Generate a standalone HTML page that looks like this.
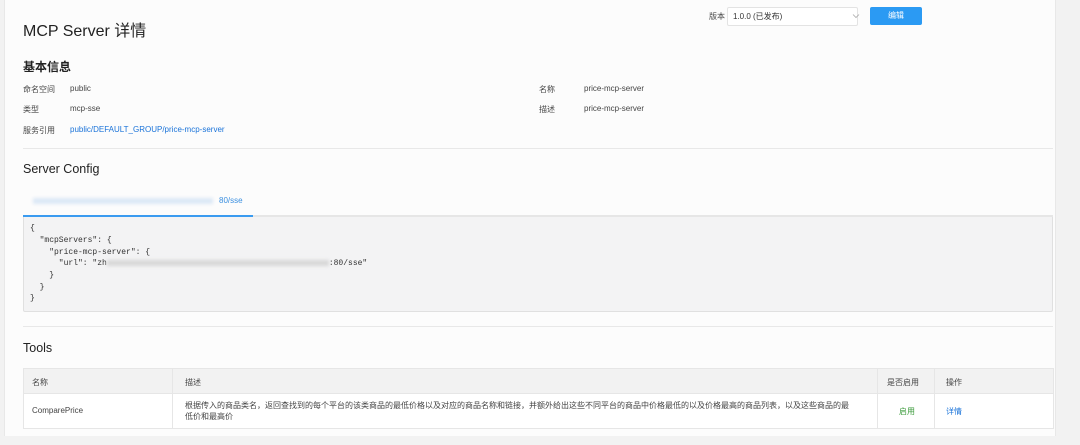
<!DOCTYPE html>
<html><head><meta charset="utf-8"><style>
*{margin:0;padding:0;box-sizing:border-box}
body{width:1080px;height:445px;overflow:hidden;background:#f2f2f2;font-family:"Liberation Sans","Noto Sans CJK SC",sans-serif;color:#333;position:relative}
.card{position:absolute;left:4px;top:0;width:1052px;height:436px;background:#fcfcfc;border-left:1px solid #e8e8e8;border-right:1px solid #e8e8e8}
.a{position:absolute;white-space:nowrap}
.s{font-size:8px;color:#444}
.hr{position:absolute;left:23px;width:1030px;height:1px;background:#e8e8e8}
.mono{font-family:"Liberation Mono","Noto Sans CJK SC",monospace;font-size:8px;color:#333;position:absolute;left:30px;white-space:pre}
.blur{display:inline-block;background:#d8d8d8;filter:blur(1.5px);height:6px;vertical-align:middle}
</style></head><body>
<div class="card"></div>
<div class="a" style="left:23px;top:17px;font-size:16px;color:#222">MCP Server 详情</div>
<div class="a s" style="left:709px;top:11px">版本</div>
<div class="a" style="left:727px;top:7px;width:131px;height:19px;background:#fff;border:1px solid #e3e3e3;border-radius:2px"></div>
<div class="a s" style="left:733px;top:11px;color:#333">1.0.0 (已发布)</div>
<svg class="a" style="left:852px;top:13px" width="8" height="6"><path d="M1 1.5L4 4.5L7 1.5" fill="none" stroke="#aaa" stroke-width="0.8"/></svg>
<div class="a" style="left:870px;top:7px;width:52px;height:18px;background:#2b9af3;border-radius:2px;color:#fff;font-size:8px;text-align:center;line-height:18px">编辑</div>
<div class="a" style="left:23px;top:58px;font-size:12px;font-weight:bold;color:#222">基本信息</div>
<div class="a s" style="left:23px;top:84px">命名空间</div><div class="a s" style="left:70px;top:84px">public</div>
<div class="a s" style="left:23px;top:104px">类型</div><div class="a s" style="left:70px;top:104px">mcp-sse</div>
<div class="a s" style="left:23px;top:125px">服务引用</div><div class="a s" style="left:70px;top:125px;color:#1a73d9">public/DEFAULT_GROUP/price-mcp-server</div>
<div class="a s" style="left:539px;top:84px">名称</div><div class="a s" style="left:584px;top:84px">price-mcp-server</div>
<div class="a s" style="left:539px;top:104px">描述</div><div class="a s" style="left:584px;top:104px">price-mcp-server</div>
<div class="hr" style="top:148px"></div>
<div class="a" style="left:23px;top:162px;font-size:12.5px;color:#222">Server Config</div>
<div class="a" style="left:33px;top:198px;width:180px;height:6px;background:#dce8f6;filter:blur(1.5px)"></div>
<div class="a s" style="left:219px;top:196px;color:#3a8fe0">80/sse</div>
<div class="a" style="left:23px;top:215px;width:1030px;height:2px;background:#e6e6e6"></div>
<div class="a" style="left:23px;top:215px;width:230px;height:2px;background:#3a9bf0"></div>
<div class="a" style="left:23px;top:217px;width:1030px;height:95px;background:#f3f3f4;border:1px solid #e0e0e0;border-top:none;border-radius:0 0 2px 2px"></div>
<div class="mono" style="top:224px">{</div>
<div class="mono" style="top:236px">  "mcpServers": {</div>
<div class="mono" style="top:248px">    "price-mcp-server": {</div>
<div class="mono" style="top:259px">      "url": "zh<span class="blur" style="width:222px"></span>:80/sse"</div>
<div class="mono" style="top:271px">    }</div>
<div class="mono" style="top:283px">  }</div>
<div class="mono" style="top:294px">}</div>
<div class="hr" style="top:326px"></div>
<div class="a" style="left:23px;top:341px;font-size:12.5px;color:#222">Tools</div>
<div class="a" style="left:23px;top:368px;width:1031px;height:61px;border:1px solid #e6e6e6;background:#fff"></div>
<div class="a" style="left:24px;top:369px;width:1029px;height:25px;background:#f2f2f2;border-bottom:1px solid #e6e6e6"></div>
<div class="a" style="left:172px;top:369px;width:1px;height:59px;background:#e6e6e6"></div>
<div class="a" style="left:877px;top:369px;width:1px;height:59px;background:#e6e6e6"></div>
<div class="a" style="left:934px;top:369px;width:1px;height:59px;background:#e6e6e6"></div>
<div class="a s" style="left:32px;top:377px">名称</div>
<div class="a s" style="left:185px;top:377px">描述</div>
<div class="a s" style="left:887px;top:377px">是否启用</div>
<div class="a s" style="left:946px;top:377px">操作</div>
<div class="a s" style="left:32px;top:406px">ComparePrice</div>
<div class="a s" style="left:185px;top:400px;line-height:11px">根据传入的商品类名，返回查找到的每个平台的该类商品的最低价格以及对应的商品名称和链接，并额外给出这些不同平台的商品中价格最低的以及价格最高的商品列表，以及这些商品的最<br>低价和最高价</div>
<div class="a s" style="left:899px;top:406px;color:#3a9a3a">启用</div>
<div class="a s" style="left:946px;top:406px;color:#1a73d9">详情</div>
</body></html>
